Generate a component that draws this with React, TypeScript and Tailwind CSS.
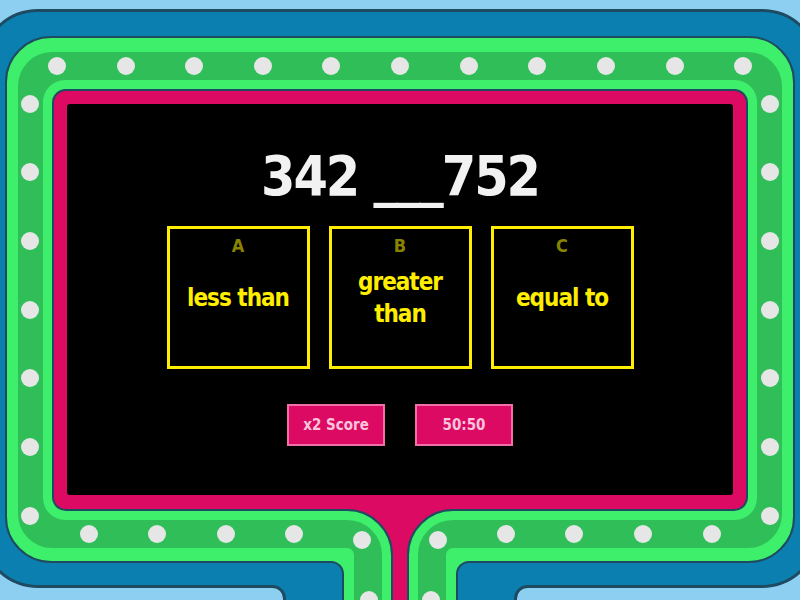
import React from 'react';

// Board palette
const OUTLINE = '#1e4b61';
const BLUE = '#0b80b0';
const LIGHT_GREEN = '#3def6b';
const DARK_GREEN = '#2fbe58';
const PINK = '#dc0a62';
const DOT = '#e6e6e6';

// Light bulbs around the board, in page coordinates (centre points)
const topRow = [57, 126, 194, 263, 331, 400, 469, 537, 606, 675, 743].map((x) => [x, 66]);
const sideYs = [104, 172, 241, 310, 378, 447, 516];
const leftCol = sideYs.map((y) => [30, y]);
const rightCol = sideYs.map((y) => [770, y]);
const bottomRow = [89, 157, 226, 294, 506, 574, 643, 712].map((x) => [x, 534]);
const bulbs = [...topRow, ...leftCol, ...rightCol, ...bottomRow];

// the bulb band's own origin on the page
const BAND_X = 18;
const BAND_Y = 52;

const answers = [
  { label: 'A', text: 'less than' },
  { label: 'B', text: 'greater than' },
  { label: 'C', text: 'equal to' },
];

/**
 * The stand under the board: the pink screen edge runs down into a post,
 * and the green bulb frame bends down on both sides of it.
 */
function Stand() {
  return (
    <svg
      className="absolute left-[260px] top-[495px] h-[105px] w-[280px]"
      viewBox="260 495 280 105"
    >
      {/* blue base */}
      <path
        d="M260,576 L540,576 L540,586.5 L527.5,586.5 A12,12 0 0 0 515.5,598.5 L515.5,605 L284.5,605 L284.5,598.5 A12,12 0 0 0 272.5,586.5 L260,586.5 Z"
        fill={BLUE}
      />
      <path d="M255,586.5 L272.5,586.5 A12,12 0 0 1 284.5,598.5 L284.5,605" fill="none" stroke={OUTLINE} strokeWidth={3} />
      <path d="M545,586.5 L527.5,586.5 A12,12 0 0 0 515.5,598.5 L515.5,605" fill="none" stroke={OUTLINE} strokeWidth={3} />

      {/* pink post */}
      <rect x={345} y={500} width={110} height={105} fill={PINK} />

      {/* green frame bending down */}
      <path
        d="M310,510 L347,510 A45,45 0 0 1 392,555 L392,605 L343,605 L343,574 A12,12 0 0 0 331,562 L310,562 Z"
        fill={LIGHT_GREEN}
      />
      <path
        d="M490,510 L453,510 A45,45 0 0 0 408,555 L408,605 L457,605 L457,574 A12,12 0 0 1 469,562 L490,562 Z"
        fill={LIGHT_GREEN}
      />
      <path d="M305,510 L347,510 A45,45 0 0 1 392,555 L392,605" fill="none" stroke={OUTLINE} strokeWidth={2} />
      <path d="M495,510 L453,510 A45,45 0 0 0 408,555 L408,605" fill="none" stroke={OUTLINE} strokeWidth={2} />
      <path d="M305,562 L331,562 A12,12 0 0 1 343,574 L343,605" fill="none" stroke={OUTLINE} strokeWidth={2} />
      <path d="M495,562 L469,562 A12,12 0 0 0 457,574 L457,605" fill="none" stroke={OUTLINE} strokeWidth={2} />

      {/* bulb band */}
      <path d="M310,534 L347,534 A21,21 0 0 1 368,555 L368,605" fill="none" stroke={DARK_GREEN} strokeWidth={28} />
      <path d="M490,534 L453,534 A21,21 0 0 0 432,555 L432,605" fill="none" stroke={DARK_GREEN} strokeWidth={28} />

      <circle cx={362} cy={540} r={9} fill={DOT} />
      <circle cx={438} cy={540} r={9} fill={DOT} />
      <circle cx={369} cy={600} r={9} fill={DOT} />
      <circle cx={431} cy={600} r={9} fill={DOT} />
    </svg>
  );
}

export default function App() {
  return (
    <div className="relative h-[600px] w-[800px] overflow-hidden bg-[#8ccff0] font-['DejaVu_Sans_Condensed','DejaVu_Sans',sans-serif]">
      <div className="pt-[9px]">
        {/* blue cabinet */}
        <div className="mx-[-20px] h-[579px] rounded-[58px] border-[3px] border-[#1e4b61] bg-[#0b80b0] px-[22px] pb-[22px] pt-[24px]">
          {/* green bulb frame */}
          <div className="h-full rounded-[46px] border-2 border-[#1e4b61] bg-[#3def6b] px-[11px] pb-[13px] pt-[14px]">
            <div className="relative h-full rounded-[34px] bg-[#2fbe58] px-[25px] py-[28px]">
              {bulbs.map(([x, y], i) => (
                <span
                  key={i}
                  className="absolute h-[18px] w-[18px] rounded-full bg-[#e6e6e6]"
                  style={{ left: x - BAND_X - 9, top: y - BAND_Y - 9 }}
                />
              ))}
              <div className="h-full rounded-[22px] bg-[#3def6b] p-[9px]">
                {/* pink screen edge */}
                <div className="h-full rounded-[14px] border-2 border-[#1e4b61] bg-[#dc0a62] px-[13px] pb-[14px] pt-[13px]">
                  {/* screen */}
                  <div className="flex h-full flex-col items-center rounded-[3px] bg-black">
                    <h1 className="mt-[42px] text-[55px] font-bold leading-[60px] tracking-[-2px] text-[#f2f2f2]">
                      342 ___752
                    </h1>

                    <div className="mt-[20px] flex gap-[19px]">
                      {answers.map((a) => (
                        <div
                          key={a.label}
                          className="flex h-[143px] w-[143px] flex-col items-center border-[3px] border-[#ffee00]"
                        >
                          <div className="h-[34px] pt-[8px] text-[18px] font-bold leading-[18px] text-[#8a8300]">
                            {a.label}
                          </div>
                          <div className="flex flex-1 items-center justify-center px-[10px] text-center text-[24px] font-bold leading-[32px] tracking-[-1px] text-[#ffee00]">
                            {a.text}
                          </div>
                          <div className="h-[34px]" />
                        </div>
                      ))}
                    </div>

                    <div className="mt-[35px] flex gap-[30px]">
                      <button className="flex h-[42px] w-[98px] items-center justify-center border-2 border-[#f070a8] bg-[#dc0a62] text-[15px] font-bold text-[#fbc3dc]">
                        x2 Score
                      </button>
                      <button className="flex h-[42px] w-[98px] items-center justify-center border-2 border-[#f070a8] bg-[#dc0a62] text-[15px] font-bold text-[#fbc3dc]">
                        50:50
                      </button>
                    </div>
                  </div>
                </div>
              </div>
            </div>
          </div>
        </div>
      </div>

      <Stand />
    </div>
  );
}
